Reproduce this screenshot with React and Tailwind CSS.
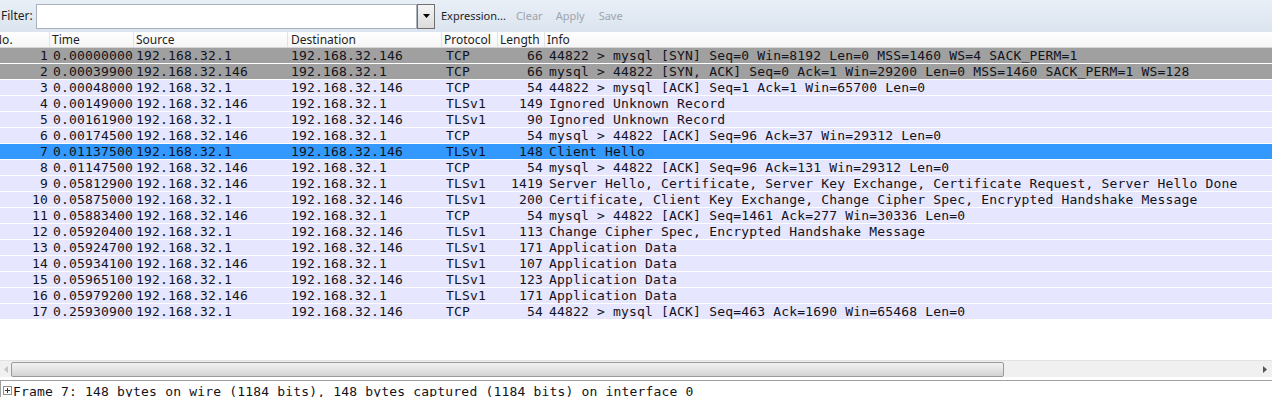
import React from 'react';

const packets = [
  [1, '0.00000000', '192.168.32.1', '192.168.32.146', 'TCP', 66, '44822 > mysql [SYN] Seq=0 Win=8192 Len=0 MSS=1460 WS=4 SACK_PERM=1', 'gray'],
  [2, '0.00039900', '192.168.32.146', '192.168.32.1', 'TCP', 66, 'mysql > 44822 [SYN, ACK] Seq=0 Ack=1 Win=29200 Len=0 MSS=1460 SACK_PERM=1 WS=128', 'gray'],
  [3, '0.00048000', '192.168.32.1', '192.168.32.146', 'TCP', 54, '44822 > mysql [ACK] Seq=1 Ack=1 Win=65700 Len=0'],
  [4, '0.00149000', '192.168.32.146', '192.168.32.1', 'TLSv1', 149, 'Ignored Unknown Record'],
  [5, '0.00161900', '192.168.32.1', '192.168.32.146', 'TLSv1', 90, 'Ignored Unknown Record'],
  [6, '0.00174500', '192.168.32.146', '192.168.32.1', 'TCP', 54, 'mysql > 44822 [ACK] Seq=96 Ack=37 Win=29312 Len=0'],
  [7, '0.01137500', '192.168.32.1', '192.168.32.146', 'TLSv1', 148, 'Client Hello', 'selected'],
  [8, '0.01147500', '192.168.32.146', '192.168.32.1', 'TCP', 54, 'mysql > 44822 [ACK] Seq=96 Ack=131 Win=29312 Len=0'],
  [9, '0.05812900', '192.168.32.146', '192.168.32.1', 'TLSv1', 1419, 'Server Hello, Certificate, Server Key Exchange, Certificate Request, Server Hello Done'],
  [10, '0.05875000', '192.168.32.1', '192.168.32.146', 'TLSv1', 200, 'Certificate, Client Key Exchange, Change Cipher Spec, Encrypted Handshake Message'],
  [11, '0.05883400', '192.168.32.146', '192.168.32.1', 'TCP', 54, 'mysql > 44822 [ACK] Seq=1461 Ack=277 Win=30336 Len=0'],
  [12, '0.05920400', '192.168.32.1', '192.168.32.146', 'TLSv1', 113, 'Change Cipher Spec, Encrypted Handshake Message'],
  [13, '0.05924700', '192.168.32.1', '192.168.32.146', 'TLSv1', 171, 'Application Data'],
  [14, '0.05934100', '192.168.32.146', '192.168.32.1', 'TLSv1', 107, 'Application Data'],
  [15, '0.05965100', '192.168.32.1', '192.168.32.146', 'TLSv1', 123, 'Application Data'],
  [16, '0.05979200', '192.168.32.146', '192.168.32.1', 'TLSv1', 171, 'Application Data'],
  [17, '0.25930900', '192.168.32.1', '192.168.32.146', 'TCP', 54, '44822 > mysql [ACK] Seq=463 Ack=1690 Win=65468 Len=0'],
];

const ui = "font-['Segoe_UI','Noto_Sans',sans-serif]";
const mono = "font-['DejaVu_Sans_Mono',monospace] tracking-[0.18px]";

function Toolbar() {
  return (
    <div className={`h-[32px] flex items-center bg-gradient-to-b from-[#e9eff7] to-[#dbe4ef] text-[11px] ${ui}`}>
      <span className="ml-[1px] w-[35px] text-[12px] text-[#1e1e1e]">Filter:</span>
      <div className="h-[25px] w-[381px] bg-white border border-[#a9b1bc]"></div>
      <div className="h-[25px] w-[18px] border border-[#707070] bg-gradient-to-b from-[#f4f4f4] to-[#dcdcdc] flex items-center justify-center">
        <svg width="7" height="4" viewBox="0 0 7 4"><path d="M0 0h7L3.5 4z" fill="#000" /></svg>
      </div>
      <span className="ml-[6px] text-[#1e1e1e]">Expression...</span>
      <span className="ml-[10px] text-[#9ea4ab]">Clear</span>
      <span className="ml-[13px] text-[#9ea4ab]">Apply</span>
      <span className="ml-[14px] text-[#9ea4ab]">Save</span>
    </div>
  );
}

function Header() {
  const cell = 'h-full flex items-center border-r border-[#e3e3e3]';
  return (
    <div className={`h-[16px] flex bg-gradient-to-b from-white to-[#f5f5f5] border-b border-[#d6d6d6] text-[12px] text-[#1e1e1e] ${ui}`}>
      <div className={`${cell} w-[50px] overflow-hidden`}><span className="-ml-[7px]">No.</span></div>
      <div className={`${cell} w-[84px] pl-[2px]`}>Time</div>
      <div className={`${cell} w-[154px] pl-[2px]`}>Source</div>
      <div className={`${cell} w-[154px] pl-[3px]`}>Destination</div>
      <div className={`${cell} w-[56px] pl-[2px]`}>Protocol</div>
      <div className={`${cell} w-[47px] pl-[2px]`}>Length</div>
      <div className="h-full flex items-center pl-[2px] flex-1">Info</div>
    </div>
  );
}

function Row({ p }) {
  const [no, time, src, dst, proto, len, info, kind] = p;
  const bg = kind === 'gray' ? 'bg-[#a0a0a0]' : kind === 'selected' ? 'bg-[#3399ff]' : 'bg-[#e7e6ff]';
  return (
    <div className={`h-[16px] flex items-center border-b border-white whitespace-pre text-[13px] leading-[15px] text-[#12131c] ${mono} ${bg}`}>
      <div className="w-[50px] text-right pr-[2px]">{no}</div>
      <div className="w-[84px] pl-[3px] overflow-hidden">{time}</div>
      <div className="w-[154px] pl-[2px]">{src}</div>
      <div className="w-[154px] pl-[3px]">{dst}</div>
      <div className="w-[56px] pl-[4px]">{proto}</div>
      <div className="w-[47px] text-right pr-[2px]">{len}</div>
      <div className="flex-1 pl-[4px]">{info}</div>
    </div>
  );
}

function Scrollbar() {
  return (
    <div className="h-[17px] flex items-center bg-[#f0f0f0] border-t border-[#e2e2e2]">
      <div className="w-[11px] flex justify-center">
        <svg width="4" height="7" viewBox="0 0 4 7"><path d="M4 0v7L0 3.5z" fill="#c4c4c4" /></svg>
      </div>
      <div className="h-[15px] w-[993px] rounded-[2px] border border-[#9a9a9a] bg-gradient-to-b from-[#f2f2f2] via-[#e4e4e4] to-[#d2d2d2]"></div>
      <div className="flex-1"></div>
      <div className="w-[11px] flex justify-center mr-[2px]">
        <svg width="4" height="7" viewBox="0 0 4 7"><path d="M0 0v7L4 3.5z" fill="#555" /></svg>
      </div>
    </div>
  );
}

export default function App() {
  return (
    <div className="w-[1272px] h-[397px] overflow-hidden bg-white flex flex-col">
      <Toolbar />
      <Header />
      <div>
        {packets.map(p => <Row key={p[0]} p={p} />)}
      </div>
      <div className="flex-1"></div>
      <Scrollbar />
      <div className="h-[3px]"></div>
      <div className={`h-[17px] flex items-start border-t border-l border-[#a0a0a0] bg-white whitespace-pre text-[13px] leading-[15px] text-[#12131c] ${mono}`}>
        <div className="w-[12px] flex justify-center pt-[5px]">
          <svg width="9" height="9" viewBox="0 0 9 9">
            <rect x="0.5" y="0.5" width="8" height="8" fill="#fff" stroke="#8e8f8f" />
            <path d="M2 4.5h5M4.5 2v5" stroke="#333" />
          </svg>
        </div>
        <span className="pt-[3px]">Frame 7: 148 bytes on wire (1184 bits), 148 bytes captured (1184 bits) on interface 0</span>
      </div>
    </div>
  );
}
